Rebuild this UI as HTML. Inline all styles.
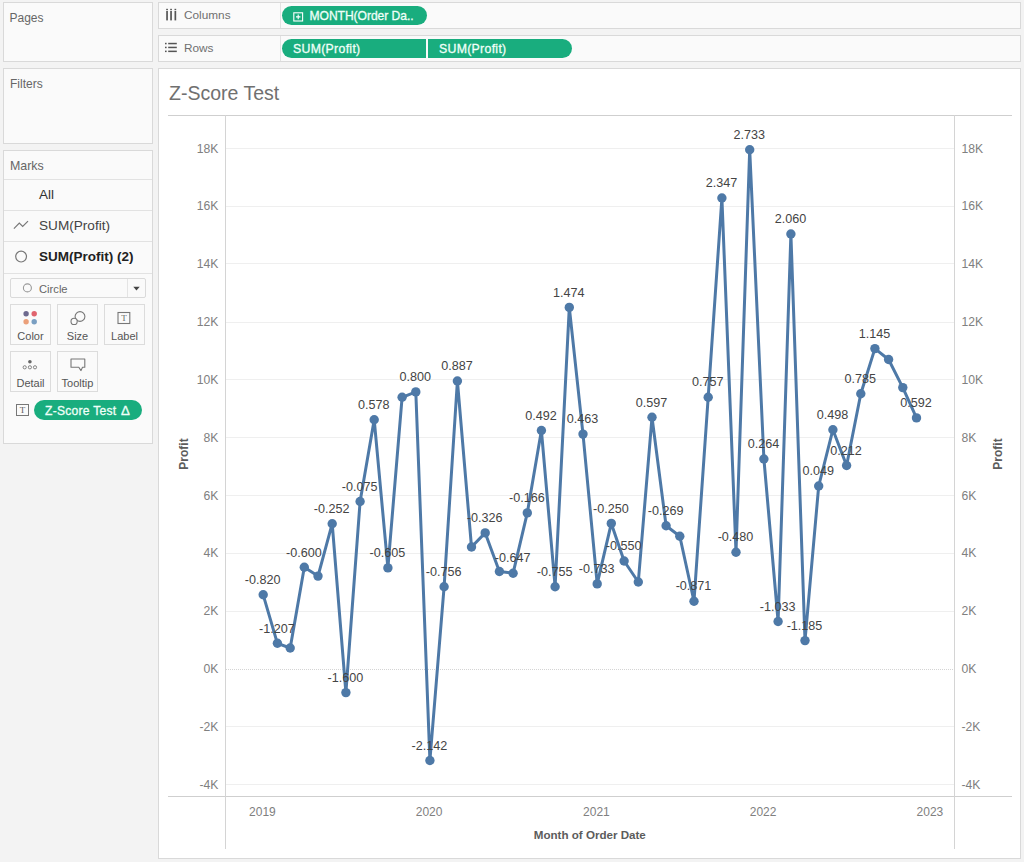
<!DOCTYPE html>
<html><head><meta charset="utf-8">
<style>
*{margin:0;padding:0;box-sizing:border-box}
html,body{width:1024px;height:862px;overflow:hidden;background:#f3f3f3;font-family:"Liberation Sans",sans-serif;position:relative}
.p{position:absolute;background:#fafafa;border:1px solid #d9d9d9}
.t{position:absolute;white-space:nowrap;line-height:1}
.hd{color:#666;font-size:12px}
.row{position:absolute;left:0;width:148px;height:1px;background:#e2e2e2}
.btn{position:absolute;width:41px;height:41px;border:1px solid #dcdcdc;background:#fafafa}
.btn .l{position:absolute;left:-2px;width:43px;text-align:center;font-size:11px;color:#555;top:25.5px;line-height:1}
.btn svg{position:absolute;left:0;top:0}
.pill{position:absolute;background:#19ad7e;color:#fff;font-size:12px;line-height:1;white-space:nowrap}
svg text{font-family:"Liberation Sans",sans-serif}
.ax{font-size:12.2px;fill:#808080}
.axy{font-size:12px;fill:#808080}
.at{font-size:12px;fill:#5c5c5c;font-weight:bold}
.lb{font-size:12.6px;fill:#444}
</style></head><body>
<!-- Pages -->
<div class="p" style="left:3px;top:2px;width:150px;height:60px"></div>
<div class="t hd" style="left:9.5px;top:12px">Pages</div>
<!-- Filters -->
<div class="p" style="left:3px;top:68px;width:150px;height:76px"></div>
<div class="t hd" style="left:10px;top:78px">Filters</div>
<!-- Marks -->
<div class="p" style="left:3px;top:150px;width:150px;height:294px">
  <div class="row" style="top:28px"></div>
  <div class="row" style="top:59px"></div>
  <div class="row" style="top:90px"></div>
  <div class="row" style="top:122px"></div>
</div>
<div class="t hd" style="left:10px;top:159.5px;font-size:12.4px">Marks</div>
<div class="t" style="left:39px;top:188px;font-size:13.5px;color:#333">All</div>
<svg style="position:absolute;left:13px;top:220px" width="17" height="11"><polyline points="0.9,8.6 6.3,3 9.7,6.4 15,1.1" fill="none" stroke="#777" stroke-width="1.2"/></svg>
<div class="t" style="left:39px;top:219px;font-size:13.6px;color:#444">SUM(Profit)</div>
<svg style="position:absolute;left:14px;top:249px" width="15" height="15"><circle cx="7.1" cy="7.6" r="5.4" fill="none" stroke="#777" stroke-width="1.2"/></svg>
<div class="t" style="left:39px;top:249.5px;font-size:13.5px;color:#222;font-weight:bold">SUM(Profit) (2)</div>
<!-- dropdown -->
<div style="position:absolute;left:10px;top:278px;width:136px;height:20px;border:1px solid #dadada;background:#fafafa;border-radius:2px"></div>
<div style="position:absolute;left:127px;top:279px;width:1px;height:18px;background:#e4e4e4"></div>
<svg style="position:absolute;left:22px;top:283px" width="11" height="11"><circle cx="5.4" cy="4.9" r="4" fill="none" stroke="#999" stroke-width="1.1"/></svg>
<div class="t" style="left:39px;top:284px;font-size:11.2px;color:#666">Circle</div>
<svg style="position:absolute;left:133px;top:286px" width="8" height="6"><path d="M0.3,0.8 L6.7,0.8 L3.5,4.6 Z" fill="#444"/></svg>
<!-- buttons -->
<div class="btn" style="left:10px;top:304px"><svg width="41" height="40"><circle cx="15.1" cy="8.8" r="2.7" fill="#6e6a8e"/><circle cx="23.2" cy="8.8" r="2.7" fill="#e0646e"/><circle cx="15.1" cy="16.7" r="2.7" fill="#eba07a"/><circle cx="23.2" cy="16.7" r="2.7" fill="#7a9fc2"/></svg><div class="l">Color</div></div>
<div class="btn" style="left:57px;top:304px"><svg width="41" height="40"><circle cx="22" cy="11.5" r="4.9" fill="none" stroke="#777" stroke-width="1.1"/><circle cx="16.1" cy="16.4" r="3.1" fill="#fafafa" stroke="#777" stroke-width="1.1"/></svg><div class="l">Size</div></div>
<div class="btn" style="left:104px;top:304px"><svg width="41" height="40"><rect x="13" y="7.5" width="11.8" height="11" fill="none" stroke="#777" stroke-width="1.1"/><text x="18.9" y="16.3" text-anchor="middle" style="font-family:'Liberation Serif',serif;font-size:9px;fill:#666">T</text></svg><div class="l">Label</div></div>
<div class="btn" style="left:10px;top:351px"><svg width="41" height="40"><circle cx="18.9" cy="9.8" r="1.8" fill="#666"/><circle cx="13.7" cy="15.3" r="1.6" fill="none" stroke="#777" stroke-width="0.9"/><circle cx="18.9" cy="15.3" r="1.6" fill="none" stroke="#777" stroke-width="0.9"/><circle cx="24" cy="15.3" r="1.6" fill="none" stroke="#777" stroke-width="0.9"/></svg><div class="l">Detail</div></div>
<div class="btn" style="left:57px;top:351px"><svg width="41" height="40"><path d="M13,7 H26.8 V15.2 H24.5 L23,18.6 L20.8,15.2 H13 Z" fill="none" stroke="#777" stroke-width="1.1" stroke-linejoin="round"/></svg><div class="l">Tooltip</div></div>
<!-- T icon + pill -->
<svg style="position:absolute;left:16px;top:404px" width="14" height="13"><rect x="0.5" y="0.5" width="12" height="11" fill="#fafafa" stroke="#777" stroke-width="1"/><text x="6.5" y="9.2" text-anchor="middle" style="font-family:'Liberation Serif',serif;font-size:9px;fill:#555">T</text></svg>
<div class="pill" style="left:34px;top:400px;width:108px;height:19.5px;border-radius:10px"></div>
<div class="t" style="left:45px;top:404.5px;font-size:12.1px;color:#f0fff8;-webkit-text-stroke:0.3px #f0fff8;letter-spacing:0.25px">Z-Score Test</div>
<div class="t" style="left:121px;top:403.5px;font-size:13.2px;color:#f0fff8;-webkit-text-stroke:0.3px #f0fff8">&#916;</div>
<!-- Columns / Rows shelves -->
<div class="p" style="left:158px;top:2px;width:863px;height:27px"></div>
<div style="position:absolute;left:280px;top:3px;width:1px;height:25px;background:#e2e2e2"></div>
<svg style="position:absolute;left:165px;top:8px" width="13" height="14"><g fill="#555"><rect x="1.2" y="0.8" width="1.7" height="1.4"/><rect x="1.2" y="3" width="1.7" height="9.4"/><rect x="5.2" y="0.8" width="1.7" height="1.4"/><rect x="5.2" y="3" width="1.7" height="9.4"/><rect x="9.5" y="0.8" width="1.7" height="1.4"/><rect x="9.5" y="3" width="1.7" height="9.4"/></g></svg>
<div class="t" style="left:184px;top:9.5px;font-size:11.8px;color:#707070">Columns</div>
<div class="p" style="left:158px;top:35px;width:863px;height:27px"></div>
<div style="position:absolute;left:280px;top:36px;width:1px;height:25px;background:#e2e2e2"></div>
<svg style="position:absolute;left:164px;top:42px" width="14" height="11"><g fill="#555"><rect x="1" y="0.8" width="1.6" height="1.5"/><rect x="4.2" y="0.8" width="8.6" height="1.5"/><rect x="1" y="4.7" width="1.6" height="1.5"/><rect x="4.2" y="4.7" width="8.6" height="1.5"/><rect x="1" y="8.6" width="1.6" height="1.5"/><rect x="4.2" y="8.6" width="8.6" height="1.5"/></g></svg>
<div class="t" style="left:184px;top:43px;font-size:11.8px;color:#707070">Rows</div>
<div class="pill" style="left:282px;top:6px;width:145px;height:19px;border-radius:10px"></div>
<svg style="position:absolute;left:293px;top:12px" width="11" height="10"><rect x="0.8" y="0.8" width="8.8" height="8.2" fill="none" stroke="#fff" stroke-width="1.1"/><path d="M5.2,2.6 V7.2 M3,4.9 H7.4" stroke="#fff" stroke-width="1.1"/></svg>
<div class="t" style="left:309.5px;top:10.3px;font-size:12.1px;color:#f0fff8;-webkit-text-stroke:0.3px #f0fff8;letter-spacing:-0.05px">MONTH(Order Da..</div>
<div class="pill" style="left:282px;top:39px;width:144px;height:19px;border-radius:10px 0 0 10px"></div>
<div class="t" style="left:293px;top:42.5px;font-size:12.3px;color:#f0fff8;-webkit-text-stroke:0.3px #f0fff8;letter-spacing:0.3px">SUM(Profit)</div>
<div class="pill" style="left:428px;top:39px;width:144px;height:19px;border-radius:0 10px 10px 0"></div>
<div class="t" style="left:439px;top:42.5px;font-size:12.3px;color:#f0fff8;-webkit-text-stroke:0.3px #f0fff8;letter-spacing:0.3px">SUM(Profit)</div>
<!-- main panel -->
<div style="position:absolute;left:158px;top:68px;width:863px;height:791px;background:#fff;border:1px solid #d9d9d9"></div>
<div class="t" style="left:169px;top:84px;font-size:19.5px;color:#707070">Z-Score Test</div>
<svg width="1024" height="862" style="position:absolute;left:0;top:0">
<line x1="226" y1="784.5" x2="954" y2="784.5" stroke="#efefef" stroke-width="1"/>
<line x1="226" y1="726.5" x2="954" y2="726.5" stroke="#efefef" stroke-width="1"/>
<line x1="226" y1="669.5" x2="954" y2="669.5" stroke="#d4d4d4" stroke-width="1" stroke-dasharray="1,1"/>
<line x1="226" y1="611.5" x2="954" y2="611.5" stroke="#efefef" stroke-width="1"/>
<line x1="226" y1="553.5" x2="954" y2="553.5" stroke="#efefef" stroke-width="1"/>
<line x1="226" y1="495.5" x2="954" y2="495.5" stroke="#efefef" stroke-width="1"/>
<line x1="226" y1="437.5" x2="954" y2="437.5" stroke="#efefef" stroke-width="1"/>
<line x1="226" y1="379.5" x2="954" y2="379.5" stroke="#efefef" stroke-width="1"/>
<line x1="226" y1="322.5" x2="954" y2="322.5" stroke="#efefef" stroke-width="1"/>
<line x1="226" y1="263.5" x2="954" y2="263.5" stroke="#efefef" stroke-width="1"/>
<line x1="226" y1="206.5" x2="954" y2="206.5" stroke="#efefef" stroke-width="1"/>
<line x1="226" y1="148.5" x2="954" y2="148.5" stroke="#efefef" stroke-width="1"/>
<line x1="168" y1="115.5" x2="1012" y2="115.5" stroke="#cfcfcf" stroke-width="1"/>
<line x1="168" y1="796.5" x2="1012" y2="796.5" stroke="#cfcfcf" stroke-width="1"/>
<line x1="225.5" y1="115" x2="225.5" y2="849" stroke="#d4d4d4" stroke-width="1"/>
<line x1="954.5" y1="115" x2="954.5" y2="849" stroke="#d4d4d4" stroke-width="1"/>
<text x="218.5" y="788.7" text-anchor="end" class="ax">-4K</text>
<text x="961.5" y="788.7" text-anchor="start" class="ax">-4K</text>
<text x="218.5" y="730.9" text-anchor="end" class="ax">-2K</text>
<text x="961.5" y="730.9" text-anchor="start" class="ax">-2K</text>
<text x="218.5" y="673.0" text-anchor="end" class="ax">0K</text>
<text x="961.5" y="673.0" text-anchor="start" class="ax">0K</text>
<text x="218.5" y="615.2" text-anchor="end" class="ax">2K</text>
<text x="961.5" y="615.2" text-anchor="start" class="ax">2K</text>
<text x="218.5" y="557.4" text-anchor="end" class="ax">4K</text>
<text x="961.5" y="557.4" text-anchor="start" class="ax">4K</text>
<text x="218.5" y="499.6" text-anchor="end" class="ax">6K</text>
<text x="961.5" y="499.6" text-anchor="start" class="ax">6K</text>
<text x="218.5" y="441.7" text-anchor="end" class="ax">8K</text>
<text x="961.5" y="441.7" text-anchor="start" class="ax">8K</text>
<text x="218.5" y="383.9" text-anchor="end" class="ax">10K</text>
<text x="961.5" y="383.9" text-anchor="start" class="ax">10K</text>
<text x="218.5" y="326.1" text-anchor="end" class="ax">12K</text>
<text x="961.5" y="326.1" text-anchor="start" class="ax">12K</text>
<text x="218.5" y="268.3" text-anchor="end" class="ax">14K</text>
<text x="961.5" y="268.3" text-anchor="start" class="ax">14K</text>
<text x="218.5" y="210.4" text-anchor="end" class="ax">16K</text>
<text x="961.5" y="210.4" text-anchor="start" class="ax">16K</text>
<text x="218.5" y="152.6" text-anchor="end" class="ax">18K</text>
<text x="961.5" y="152.6" text-anchor="start" class="ax">18K</text>
<text x="262.4" y="815.5" text-anchor="middle" class="axy">2019</text>
<text x="429.1" y="815.5" text-anchor="middle" class="axy">2020</text>
<text x="596.4" y="815.5" text-anchor="middle" class="axy">2021</text>
<text x="763.1" y="815.5" text-anchor="middle" class="axy">2022</text>
<text x="929.9" y="815.5" text-anchor="middle" class="axy">2023</text>
<text x="589.8" y="838.8" text-anchor="middle" class="at" style="font-size:11.6px">Month of Order Date</text>
<text transform="translate(187.8,454) rotate(-90)" text-anchor="middle" class="at">Profit</text>
<text transform="translate(1001.8,454) rotate(-90)" text-anchor="middle" class="at">Profit</text>
<path d="M263.2,594.8 L277.4,643.3 L290.2,648.0 L304.3,567.3 L318.0,576.1 L332.2,523.7 L345.9,692.6 L360.1,501.5 L374.2,419.7 L387.9,567.9 L402.1,397.3 L415.8,391.9 L429.9,760.5 L444.1,586.8 L457.4,381.0 L471.5,547.0 L485.2,532.9 L499.4,571.5 L513.1,573.2 L527.3,512.9 L541.4,430.5 L555.1,586.7 L569.3,307.4 L583.0,434.1 L597.2,583.9 L611.3,523.4 L624.1,561.0 L638.3,582.0 L652.0,417.3 L666.1,525.8 L679.8,536.2 L694.0,601.2 L708.2,397.2 L721.9,198.0 L736.0,552.2 L749.7,149.7 L763.9,459.0 L778.1,621.5 L790.9,234.0 L805.0,640.6 L818.7,486.0 L832.9,429.7 L846.6,465.5 L860.8,393.7 L874.9,348.6 L888.6,359.5 L902.8,387.6 L916.5,417.9" fill="none" stroke="#4e79a7" stroke-width="3" stroke-linejoin="round" stroke-linecap="round"/>
<circle cx="263.2" cy="594.8" r="4.7" fill="#4e79a7"/>
<circle cx="277.4" cy="643.3" r="4.7" fill="#4e79a7"/>
<circle cx="290.2" cy="648.0" r="4.7" fill="#4e79a7"/>
<circle cx="304.3" cy="567.3" r="4.7" fill="#4e79a7"/>
<circle cx="318.0" cy="576.1" r="4.7" fill="#4e79a7"/>
<circle cx="332.2" cy="523.7" r="4.7" fill="#4e79a7"/>
<circle cx="345.9" cy="692.6" r="4.7" fill="#4e79a7"/>
<circle cx="360.1" cy="501.5" r="4.7" fill="#4e79a7"/>
<circle cx="374.2" cy="419.7" r="4.7" fill="#4e79a7"/>
<circle cx="387.9" cy="567.9" r="4.7" fill="#4e79a7"/>
<circle cx="402.1" cy="397.3" r="4.7" fill="#4e79a7"/>
<circle cx="415.8" cy="391.9" r="4.7" fill="#4e79a7"/>
<circle cx="429.9" cy="760.5" r="4.7" fill="#4e79a7"/>
<circle cx="444.1" cy="586.8" r="4.7" fill="#4e79a7"/>
<circle cx="457.4" cy="381.0" r="4.7" fill="#4e79a7"/>
<circle cx="471.5" cy="547.0" r="4.7" fill="#4e79a7"/>
<circle cx="485.2" cy="532.9" r="4.7" fill="#4e79a7"/>
<circle cx="499.4" cy="571.5" r="4.7" fill="#4e79a7"/>
<circle cx="513.1" cy="573.2" r="4.7" fill="#4e79a7"/>
<circle cx="527.3" cy="512.9" r="4.7" fill="#4e79a7"/>
<circle cx="541.4" cy="430.5" r="4.7" fill="#4e79a7"/>
<circle cx="555.1" cy="586.7" r="4.7" fill="#4e79a7"/>
<circle cx="569.3" cy="307.4" r="4.7" fill="#4e79a7"/>
<circle cx="583.0" cy="434.1" r="4.7" fill="#4e79a7"/>
<circle cx="597.2" cy="583.9" r="4.7" fill="#4e79a7"/>
<circle cx="611.3" cy="523.4" r="4.7" fill="#4e79a7"/>
<circle cx="624.1" cy="561.0" r="4.7" fill="#4e79a7"/>
<circle cx="638.3" cy="582.0" r="4.7" fill="#4e79a7"/>
<circle cx="652.0" cy="417.3" r="4.7" fill="#4e79a7"/>
<circle cx="666.1" cy="525.8" r="4.7" fill="#4e79a7"/>
<circle cx="679.8" cy="536.2" r="4.7" fill="#4e79a7"/>
<circle cx="694.0" cy="601.2" r="4.7" fill="#4e79a7"/>
<circle cx="708.2" cy="397.2" r="4.7" fill="#4e79a7"/>
<circle cx="721.9" cy="198.0" r="4.7" fill="#4e79a7"/>
<circle cx="736.0" cy="552.2" r="4.7" fill="#4e79a7"/>
<circle cx="749.7" cy="149.7" r="4.7" fill="#4e79a7"/>
<circle cx="763.9" cy="459.0" r="4.7" fill="#4e79a7"/>
<circle cx="778.1" cy="621.5" r="4.7" fill="#4e79a7"/>
<circle cx="790.9" cy="234.0" r="4.7" fill="#4e79a7"/>
<circle cx="805.0" cy="640.6" r="4.7" fill="#4e79a7"/>
<circle cx="818.7" cy="486.0" r="4.7" fill="#4e79a7"/>
<circle cx="832.9" cy="429.7" r="4.7" fill="#4e79a7"/>
<circle cx="846.6" cy="465.5" r="4.7" fill="#4e79a7"/>
<circle cx="860.8" cy="393.7" r="4.7" fill="#4e79a7"/>
<circle cx="874.9" cy="348.6" r="4.7" fill="#4e79a7"/>
<circle cx="888.6" cy="359.5" r="4.7" fill="#4e79a7"/>
<circle cx="902.8" cy="387.6" r="4.7" fill="#4e79a7"/>
<circle cx="916.5" cy="417.9" r="4.7" fill="#4e79a7"/>
<text x="262.7" y="584.0" text-anchor="middle" class="lb">-0.820</text>
<text x="276.9" y="632.5" text-anchor="middle" class="lb">-1.207</text>
<text x="303.8" y="556.5" text-anchor="middle" class="lb">-0.600</text>
<text x="331.7" y="512.9" text-anchor="middle" class="lb">-0.252</text>
<text x="345.4" y="681.8" text-anchor="middle" class="lb">-1.600</text>
<text x="359.6" y="490.7" text-anchor="middle" class="lb">-0.075</text>
<text x="373.7" y="408.9" text-anchor="middle" class="lb">0.578</text>
<text x="387.4" y="557.1" text-anchor="middle" class="lb">-0.605</text>
<text x="415.3" y="381.1" text-anchor="middle" class="lb">0.800</text>
<text x="429.4" y="749.7" text-anchor="middle" class="lb">-2.142</text>
<text x="443.6" y="576.0" text-anchor="middle" class="lb">-0.756</text>
<text x="456.9" y="370.2" text-anchor="middle" class="lb">0.887</text>
<text x="484.7" y="522.1" text-anchor="middle" class="lb">-0.326</text>
<text x="512.6" y="562.4" text-anchor="middle" class="lb">-0.647</text>
<text x="526.8" y="502.1" text-anchor="middle" class="lb">-0.166</text>
<text x="540.9" y="419.7" text-anchor="middle" class="lb">0.492</text>
<text x="554.6" y="575.9" text-anchor="middle" class="lb">-0.755</text>
<text x="568.8" y="296.6" text-anchor="middle" class="lb">1.474</text>
<text x="582.5" y="423.3" text-anchor="middle" class="lb">0.463</text>
<text x="596.7" y="573.1" text-anchor="middle" class="lb">-0.733</text>
<text x="610.8" y="512.6" text-anchor="middle" class="lb">-0.250</text>
<text x="623.6" y="550.2" text-anchor="middle" class="lb">-0.550</text>
<text x="651.5" y="406.5" text-anchor="middle" class="lb">0.597</text>
<text x="665.6" y="515.0" text-anchor="middle" class="lb">-0.269</text>
<text x="693.5" y="590.4" text-anchor="middle" class="lb">-0.871</text>
<text x="707.7" y="386.4" text-anchor="middle" class="lb">0.757</text>
<text x="721.4" y="187.2" text-anchor="middle" class="lb">2.347</text>
<text x="735.5" y="541.4" text-anchor="middle" class="lb">-0.480</text>
<text x="749.2" y="138.9" text-anchor="middle" class="lb">2.733</text>
<text x="763.4" y="448.2" text-anchor="middle" class="lb">0.264</text>
<text x="777.6" y="610.7" text-anchor="middle" class="lb">-1.033</text>
<text x="790.4" y="223.2" text-anchor="middle" class="lb">2.060</text>
<text x="804.5" y="629.8" text-anchor="middle" class="lb">-1.185</text>
<text x="818.2" y="475.2" text-anchor="middle" class="lb">0.049</text>
<text x="832.4" y="418.9" text-anchor="middle" class="lb">0.498</text>
<text x="846.1" y="454.7" text-anchor="middle" class="lb">0.212</text>
<text x="860.3" y="382.9" text-anchor="middle" class="lb">0.785</text>
<text x="874.4" y="337.8" text-anchor="middle" class="lb">1.145</text>
<text x="916.0" y="407.1" text-anchor="middle" class="lb">0.592</text>
</svg>
</body></html>
